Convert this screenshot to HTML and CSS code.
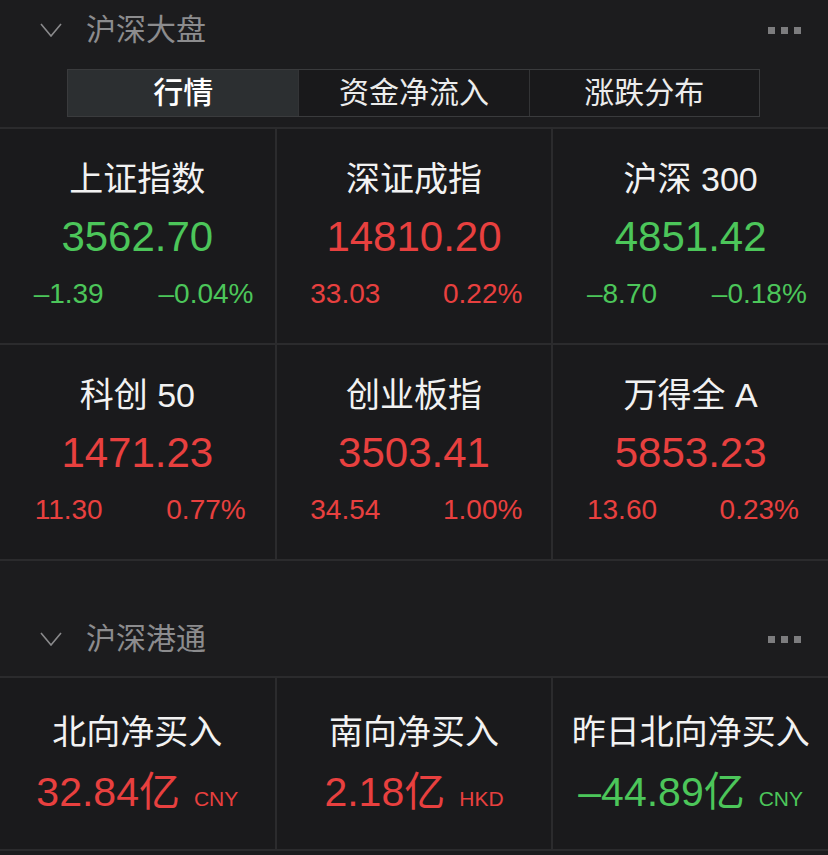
FILE: index.html
```html
<!DOCTYPE html>
<html lang="zh-CN">
<head>
    <meta charset="UTF-8">
    <meta name="viewport" content="width=device-width, initial-scale=1.0">
    <title>沪深大盘</title>
    <link rel="stylesheet" href="styles.css">
</head>
<body>
    <div class="panel">
        <div class="section-head">
            <svg class="chevron" width="22" height="14" viewBox="0 0 22 14">
                <polyline points="1,1 11,13 21,1" fill="none" stroke="#8a8a8c" stroke-width="1.6"/>
            </svg>
            <span class="section-title">沪深大盘</span>
            <div class="dots"><span></span><span></span><span></span></div>
        </div>

        <div class="tabs">
            <div class="tab active">行情</div>
            <div class="tab">资金净流入</div>
            <div class="tab">涨跌分布</div>
        </div>

        <div class="grid">
            <div class="cell">
                <div class="name">上证指数</div>
                <div class="price down">3562.70</div>
                <div class="change down"><span>–1.39</span><span>–0.04%</span></div>
            </div>
            <div class="cell">
                <div class="name">深证成指</div>
                <div class="price up">14810.20</div>
                <div class="change up"><span>33.03</span><span>0.22%</span></div>
            </div>
            <div class="cell">
                <div class="name">沪深 300</div>
                <div class="price down">4851.42</div>
                <div class="change down"><span>–8.70</span><span>–0.18%</span></div>
            </div>
            <div class="cell">
                <div class="name">科创 50</div>
                <div class="price up">1471.23</div>
                <div class="change up"><span>11.30</span><span>0.77%</span></div>
            </div>
            <div class="cell">
                <div class="name">创业板指</div>
                <div class="price up">3503.41</div>
                <div class="change up"><span>34.54</span><span>1.00%</span></div>
            </div>
            <div class="cell">
                <div class="name">万得全 A</div>
                <div class="price up">5853.23</div>
                <div class="change up"><span>13.60</span><span>0.23%</span></div>
            </div>
        </div>

        <div class="section-head second">
            <svg class="chevron" width="22" height="14" viewBox="0 0 22 14">
                <polyline points="1,1 11,13 21,1" fill="none" stroke="#8a8a8c" stroke-width="1.6"/>
            </svg>
            <span class="section-title">沪深港通</span>
            <div class="dots"><span></span><span></span><span></span></div>
        </div>

        <div class="grid flow">
            <div class="cell">
                <div class="name">北向净买入</div>
                <div class="amount up">32.84亿<small>CNY</small></div>
            </div>
            <div class="cell">
                <div class="name">南向净买入</div>
                <div class="amount up">2.18亿<small>HKD</small></div>
            </div>
            <div class="cell">
                <div class="name">昨日北向净买入</div>
                <div class="amount down">–44.89亿<small>CNY</small></div>
            </div>
        </div>
    </div>
</body>
</html>
```

FILE: styles.css
```css
body {
    margin: 0;
    background-color: #1c1c1e;
    font-family: 'Liberation Sans', 'Noto Sans CJK SC', sans-serif;
    color: #f2f2f2;
}
.panel {
    width: 828px;
}
.section-head {
    display: flex;
    align-items: center;
    height: 60px;
    padding: 0 27px 0 40px;
}
.section-head.second {
    margin-top: 48px;
}
.chevron {
    margin-right: 24px;
}
.section-title {
    font-size: 30px;
    line-height: 40px;
    color: #8c8c8e;
}
.dots {
    display: flex;
    gap: 6px;
    margin-left: auto;
}
.dots span {
    width: 7px;
    height: 7px;
    background-color: #7c7c7e;
}
.tabs {
    display: grid;
    grid-template-columns: repeat(3, 1fr);
    margin: 9px 68px 10px 67px;
    border: 1px solid #3a3b3d;
    background-color: #19191b;
}
.tab {
    text-align: center;
    font-size: 30px;
    line-height: 46px;
    color: #ececec;
    border-left: 1px solid #333436;
}
.tab:first-child {
    border-left: none;
}
.tab.active {
    background-color: #2c2f31;
    color: #ffffff;
    font-weight: 500;
}
.grid {
    display: grid;
    grid-template-columns: repeat(3, 1fr);
    gap: 2px;
    background-color: #2b2b2d;
    border-top: 2px solid #2b2b2d;
    border-bottom: 2px solid #2b2b2d;
}
.grid.flow {
    margin-top: 7px;
}
.cell {
    background-color: #1a1a1c;
    text-align: center;
    padding: 30px 0;
}
.flow .cell {
    padding: 34px 0 10px;
}
.name {
    font-size: 34px;
    line-height: 40px;
    color: #f2f2f2;
}
.price {
    font-size: 42px;
    line-height: 76px;
}
.change {
    display: grid;
    grid-template-columns: 1fr 1fr;
    font-size: 28px;
    line-height: 38px;
}
.amount {
    font-size: 41px;
    line-height: 80px;
}
.amount small {
    font-size: 21px;
    margin-left: 14px;
}
.up {
    color: #e8403f;
}
.down {
    color: #4cc65a;
}
```
